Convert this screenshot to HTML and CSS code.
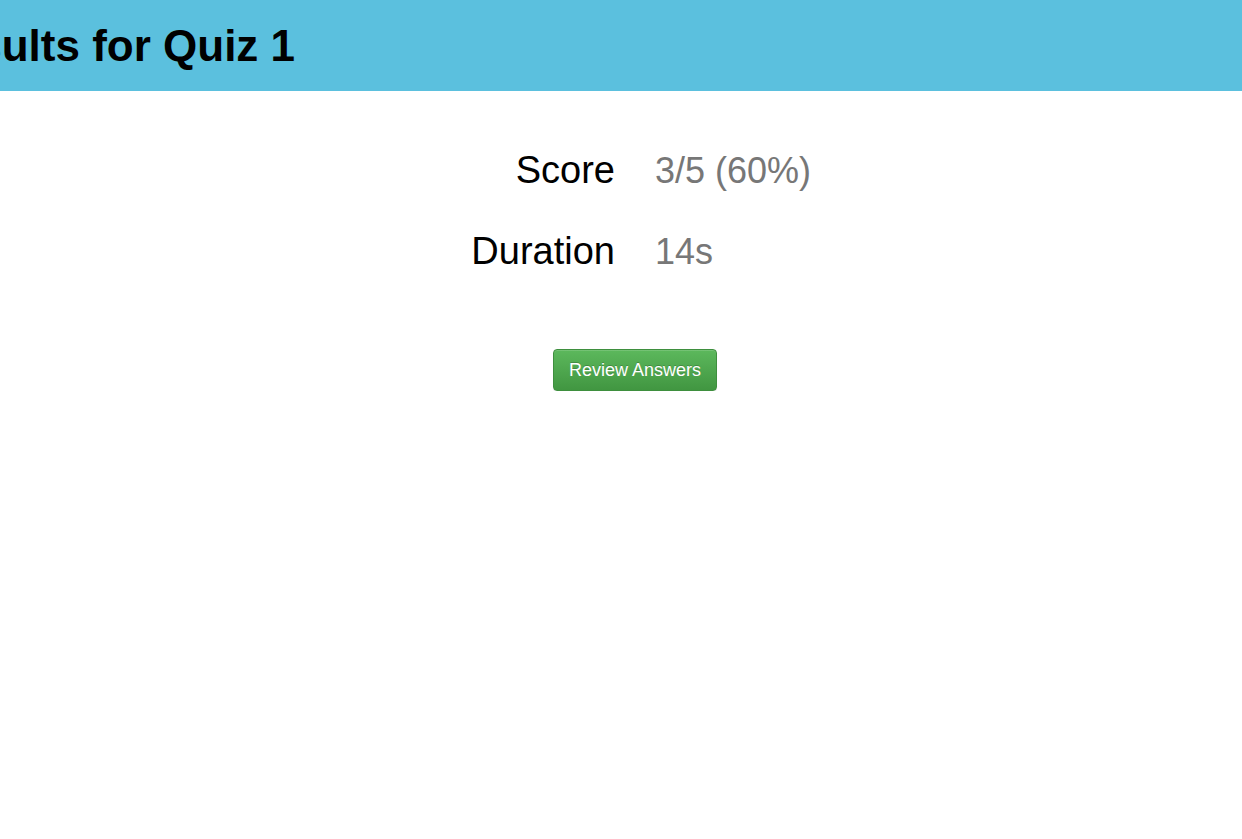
FILE: index.html
```html
<!DOCTYPE html>
<html>
<head>
<meta charset="utf-8">
<link rel="stylesheet" href="styles.css">
</head>
<body>
<header class="topbar">
  <h1 class="title">Results for Quiz 1</h1>
</header>
<main class="results">
  <div class="stats">
    <div class="label">Score</div>
    <div class="value">3/5 (60%)</div>
    <div class="label">Duration</div>
    <div class="value">14s</div>
  </div>
  <div class="actions">
    <button class="btn-review">Review Answers</button>
  </div>
</main>
</body>
</html>
```
FILE: styles.css
```css
html, body {
  margin: 0;
  padding: 0;
  background: #ffffff;
  font-family: "Liberation Sans", Arial, sans-serif;
  overflow: hidden;
}
.topbar {
  background: #5bc0de;
  height: 91px;
  display: flex;
  align-items: center;
  overflow: hidden;
}
.title {
  margin: 0 0 0 -79px;
  font-size: 44px;
  font-weight: bold;
  color: #000;
  white-space: nowrap;
}
.results {
  padding-left: 28px;
  padding-top: 57px;
}
.stats {
  display: grid;
  grid-template-columns: 1fr 1fr;
  column-gap: 40px;
  row-gap: 36px;
  align-items: baseline;
  line-height: 44px;
}
.label {
  text-align: right;
  color: #000;
  font-size: 38px;
}
.value {
  text-align: left;
  color: #777777;
  font-size: 36px;
}
.actions {
  display: flex;
  justify-content: center;
  margin-top: 75px;
}
.btn-review {
  font-family: "Liberation Sans", Arial, sans-serif;
  font-size: 18px;
  line-height: 24px;
  padding: 8px 15px;
  color: #fff;
  background-image: linear-gradient(to bottom, #5cb85c 0%, #419641 100%);
  border: 1px solid #3e8f3e;
  border-radius: 4px;
  text-shadow: 0 -1px 0 rgba(0,0,0,0.2);
  box-shadow: inset 0 1px 0 rgba(255,255,255,0.15), 0 1px 1px rgba(0,0,0,0.075);
  cursor: pointer;
}
```
